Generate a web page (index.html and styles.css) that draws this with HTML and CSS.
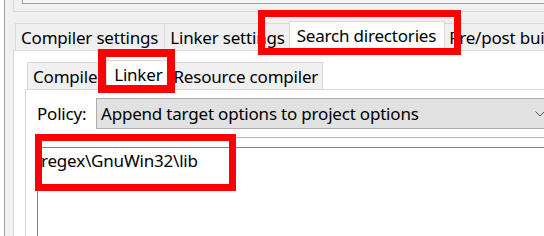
FILE: index.html
```html
<!DOCTYPE html>
<html lang="en">
<head>
  <meta charset="UTF-8">
  <title>Build options - Search directories</title>
  <link rel="stylesheet" href="styles.css">
</head>
<body>

<div class="dialog">
  <div class="top-frame"><div class="top-inner"></div></div>

  <div class="tabs-outer">
    <div class="tabbar">
      <div class="tab">Compiler settings</div>
      <div class="tab">Linker settings</div>
      <div class="tab active">Search directories</div>
      <div class="tab">Pre/post build steps</div>
    </div>
    <div class="page">
      <div class="tabs-inner">
        <div class="tabbar">
          <div class="tab">Compiler</div>
          <div class="tab active">Linker</div>
          <div class="tab">Resource compiler</div>
        </div>
        <div class="inner-page">
          <div class="policy-row">
            <span class="policy-label">Policy:</span>
            <div class="combo">
              <span>Append target options to project options</span>
              <svg class="chevron" width="10" height="6" viewBox="0 0 10 6">
                <polyline points="0.5,0.5 5,5 9.5,0.5" fill="none" stroke="#555" stroke-width="1"/>
              </svg>
            </div>
          </div>
          <div class="divider"></div>
          <div class="listbox">
            <div class="list-item">regex\GnuWin32\lib</div>
          </div>
        </div>
      </div>
    </div>
  </div>
</div>

<!-- annotation frames -->
<div class="mark mark-search"></div>
<div class="mark mark-linker"></div>
<div class="mark mark-list"></div>

</body>
</html>
```

FILE: styles.css
```css
body {
  margin: 0;
  width: 544px;
  height: 236px;
  overflow: hidden;
  position: relative;
  background: #fff;
  font-family: "Noto Sans", "DejaVu Sans", sans-serif;
  font-size: 17px;
  letter-spacing: -0.2px;
  color: #000;
}
.dialog {
  margin-left: 4px;
  border-left: 1px solid #a0a0a0;
  padding-left: 8px;
  width: 560px;
  height: 236px;
  background: #f0f0f0;
}
.top-frame {
  height: 11px;
  border-left: 1px solid #d9d9d9;
  border-bottom: 1px solid #d9d9d9;
}
.top-inner {
  margin-left: 8px;
  height: 3px;
  border-left: 1px solid #a0a0a0;
  border-bottom: 1px solid #a0a0a0;
  background: #f4f4f4;
}
.tabs-outer {
  margin-top: 9px;
}
.tabbar {
  display: flex;
  align-items: flex-end;
  height: 29px;
  padding-left: 2px;
  white-space: nowrap;
}
.tab {
  box-sizing: border-box;
  height: 27px;
  display: flex;
  align-items: center;
  padding: 0 6px 0 5px;
  margin-right: -1px;
  border: 1px solid #d9d9d9;
  border-bottom: none;
  background: #f0f0f0;
}
.tab.active {
  position: relative;
  z-index: 1;
  height: 30px;
  margin: 0 -2px -1px -2px;
  padding: 0 8px 3px 7px;
  background: #fff;
}
.page {
  height: 200px;
  border: 1px solid #d9d9d9;
  border-bottom: none;
  background: #fff;
}
.tabs-inner {
  margin: 0 11px 0 11px;
  padding-top: 9px;
}
.tabs-inner .tab {
  padding-right: 4px;
}
.tabs-inner .tab.active {
  padding-right: 6px;
}
.inner-page {
  height: 160px;
  padding: 8px 11px 0;
  border: 1px solid #d9d9d9;
  border-bottom: none;
  background: #fff;
}
.policy-row {
  display: flex;
  align-items: center;
}
.policy-label {
  width: 59px;
  flex-shrink: 0;
}
.combo {
  flex: 1;
  box-sizing: border-box;
  height: 31px;
  display: flex;
  align-items: center;
  padding: 0 3px 0 4px;
  border: 1px solid #adadad;
  background: #e1e1e1;
  white-space: nowrap;
}
.chevron {
  margin-left: auto;
}
.divider {
  margin-top: 8px;
  height: 1px;
  background: #b4b4b4;
}
.listbox {
  margin-top: 9px;
  height: 100px;
  border-top: 1px solid #828790;
  border-left: 1px solid #828790;
}
.list-item {
  padding: 1px 3px;
  white-space: nowrap;
}
.mark {
  position: absolute;
  z-index: 5;
  box-sizing: border-box;
  border: 7px solid #ff0000;
}
.mark-search {
  left: 258px;
  top: 10px;
  width: 203px;
  height: 45px;
}
.mark-linker {
  left: 98px;
  top: 49px;
  width: 77px;
  height: 44px;
  border-width: 8px;
}
.mark-list {
  left: 35px;
  top: 134px;
  width: 201px;
  height: 57px;
}
```
